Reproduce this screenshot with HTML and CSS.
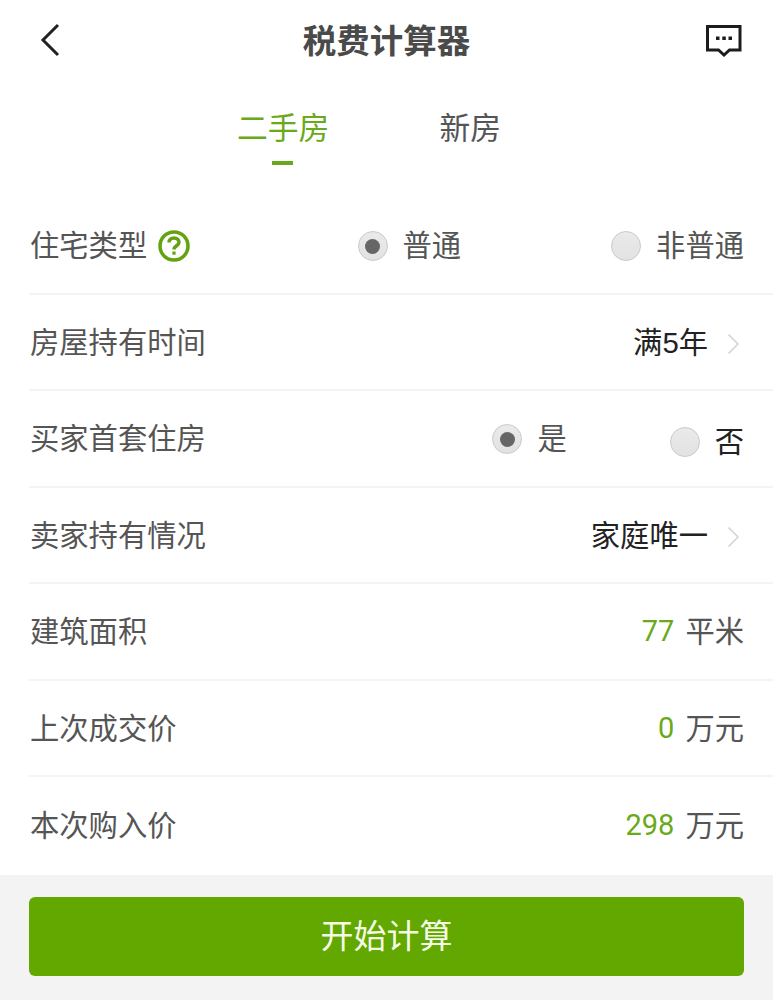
FILE: index.html
```html
<!DOCTYPE html>
<html lang="zh-CN">
<head>
  <meta charset="UTF-8" />
  <meta name="viewport" content="width=device-width, initial-scale=1.0"/>
  <title>税费计算器</title>
  <link rel="stylesheet" href="styles.css">
</head>
<body>
  <div class="page">

    <!-- top bar -->
    <header class="top-bar">
      <svg class="back-icon" viewBox="0 0 20 34" width="20" height="34">
        <path d="M18 2 L3 17 L18 32" />
      </svg>
      <h1>税费计算器</h1>
      <svg class="msg-icon" viewBox="0 0 36 32" width="36" height="32">
        <path class="msg-outline" d="M1.5 1.5 H34 V25 H23.5 L18 30 L12.5 25 H1.5 Z" />
        <rect x="10" y="11.500" width="3.500" height="3.500" />
        <rect x="16.300" y="11.500" width="3.500" height="3.500" />
        <rect x="22.500" y="11.500" width="3.500" height="3.500" />
      </svg>
    </header>

    <!-- tabs -->
    <nav class="tabs">
      <div class="tab active">二手房</div>
      <div class="tab">新房</div>
    </nav>

    <!-- form rows -->
    <section class="form">
      <div class="row">
        <span class="label">住宅类型</span>
        <svg class="help-icon" viewBox="0 0 32 32" width="32" height="32">
          <circle cx="16" cy="16" r="14" />
          <path d="M11 12.500 C11 9.500 13.300 8 16 8 C18.800 8 21 9.700 21 12.300 C21 15.800 16 15.800 16 19.500" />
          <rect x="14.400" y="21.500" width="3.200" height="3.200" />
        </svg>
        <div class="options type-options">
          <div class="option"><span class="radio checked"></span>普通</div>
          <div class="option"><span class="radio"></span>非普通</div>
        </div>
      </div>

      <div class="row">
        <span class="label">房屋持有时间</span>
        <div class="select">
          <span>满5年</span>
          <svg class="chevron" viewBox="0 0 13 22" width="13" height="22"><path d="M1.500 1.500 L11 11 L1.500 20.500" /></svg>
        </div>
      </div>

      <div class="row">
        <span class="label">买家首套住房</span>
        <div class="options yes-no">
          <div class="option"><span class="radio checked"></span>是</div>
          <div class="option option-low"><span class="radio"></span><span class="dark">否</span></div>
        </div>
      </div>

      <div class="row">
        <span class="label">卖家持有情况</span>
        <div class="select">
          <span>家庭唯一</span>
          <svg class="chevron" viewBox="0 0 13 22" width="13" height="22"><path d="M1.500 1.500 L11 11 L1.500 20.500" /></svg>
        </div>
      </div>

      <div class="row">
        <span class="label">建筑面积</span>
        <div class="amount"><b>77</b>平米</div>
      </div>

      <div class="row">
        <span class="label">上次成交价</span>
        <div class="amount"><b>0</b>万元</div>
      </div>

      <div class="row">
        <span class="label">本次购入价</span>
        <div class="amount"><b>298</b>万元</div>
      </div>
    </section>

    <!-- bottom button -->
    <footer class="bottom-bar">
      <button class="calc-btn">开始计算</button>
    </footer>

  </div>
</body>
</html>
```

FILE: styles.css
```css
* {
  margin: 0;
  padding: 0;
  box-sizing: border-box;
}

body, html {
  height: 100%;
  background: #fff;
  font-family: "Liberation Sans", "Noto Sans CJK SC", sans-serif;
  overflow: hidden;
}

.page {
  width: 773px;
  height: 1000px;
  display: flex;
  flex-direction: column;
}

.top-bar {
  height: 82px;
  display: flex;
  align-items: center;
  justify-content: space-between;
  padding: 0 31px 0 40px;
}

.top-bar h1 {
  font-size: 33.500px;
  font-weight: 700;
  color: #4a4a4a;
  margin: 0 0 6px 7px;
}

.back-icon {
  margin-bottom: 3px;
}

.back-icon path {
  fill: none;
  stroke: #222;
  stroke-width: 3;
}

.msg-outline {
  fill: none;
  stroke: #1c1c1c;
  stroke-width: 3;
}

.msg-icon rect {
  fill: #1c1c1c;
}

.tabs {
  height: 116px;
  display: flex;
  justify-content: center;
  gap: 110px;
  padding-top: 24px;
  padding-right: 35px;
}

.tab {
  position: relative;
  height: 45px;
  font-size: 30.800px;
  line-height: 45px;
  color: #555;
}

.tab.active {
  color: #6aaa1a;
}

.tab.active::after {
  content: "";
  position: absolute;
  left: 35px;
  bottom: -14px;
  width: 21px;
  height: 4px;
  background: #6aaa1a;
}

.form {
  margin-left: 29px;
  height: 677px;
}

.row {
  height: 96.500px;
  display: flex;
  align-items: center;
  padding: 0 29px 4px 1px;
  border-bottom: 2px solid #f4f4f4;
  font-size: 29.300px;
  color: #555;
}

.row:last-child {
  border-bottom: none;
}

.help-icon {
  margin: 6px 0 0 11px;
}

.help-icon circle,
.help-icon path {
  fill: none;
  stroke: #64a30f;
  stroke-width: 3.500;
}

.help-icon rect {
  fill: #64a30f;
}

.options {
  margin-left: auto;
  display: flex;
  align-items: center;
}

.type-options {
  gap: 150px;
}

.yes-no {
  gap: 103px;
}

.option {
  display: flex;
  align-items: center;
  gap: 15px;
}

.option-low {
  margin-top: 6px;
}

.dark {
  color: #222;
}

.radio {
  width: 30px;
  height: 30px;
  margin-top: 6px;
  border-radius: 50%;
  border: 1px solid #c9c9c9;
  background: linear-gradient(#eaeaea, #e2e2e2);
  display: flex;
  align-items: center;
  justify-content: center;
}

.radio.checked::before {
  content: "";
  width: 15px;
  height: 15px;
  border-radius: 50%;
  background: #666;
}

.select {
  margin-left: auto;
  display: flex;
  align-items: center;
  gap: 19px;
  padding-right: 4px;
  color: #222;
}

.chevron {
  margin-top: 8px;
}

.chevron path {
  fill: none;
  stroke: #d2d2d2;
  stroke-width: 1.500;
}

.amount {
  margin-left: auto;
  display: flex;
  align-items: center;
  gap: 11px;
}

.amount b {
  font-family: Roboto, sans-serif;
  font-size: 29px;
  font-weight: 400;
  padding-top: 4px;
  color: #6aaa1a;
}

.bottom-bar {
  flex: 1;
  background: #f3f3f3;
  padding: 22px 29px 24px;
}

.calc-btn {
  width: 100%;
  height: 79px;
  padding-bottom: 5px;
  border: none;
  border-radius: 6px;
  background: #63a800;
  color: #f4fbe6;
  font-family: inherit;
  font-size: 33px;
}
```
